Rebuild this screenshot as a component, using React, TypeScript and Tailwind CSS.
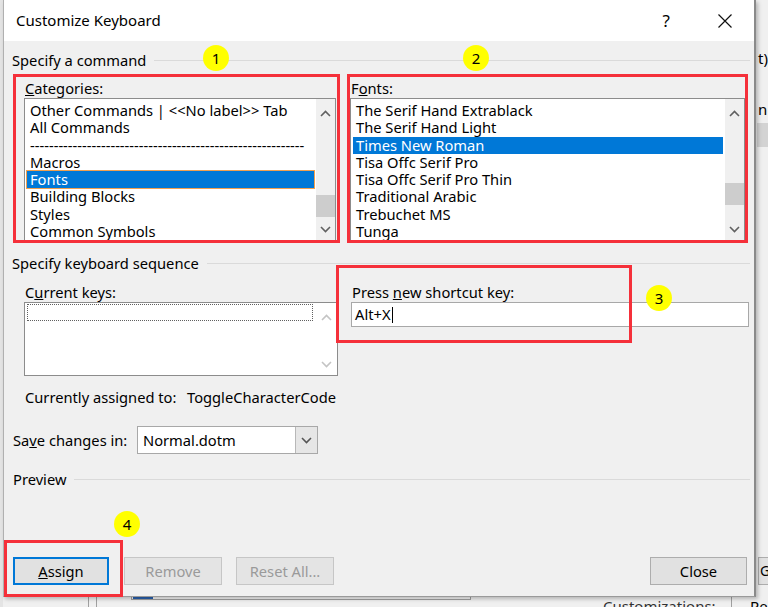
import React from 'react';

const categories = [
  'Other Commands | <<No label>> Tab',
  'All Commands',
  '-'.repeat(58),
  'Macros',
  'Fonts',
  'Building Blocks',
  'Styles',
  'Common Symbols',
];

const fontNames = [
  'The Serif Hand Extrablack',
  'The Serif Hand Light',
  'Times New Roman',
  'Tisa Offc Serif Pro',
  'Tisa Offc Serif Pro Thin',
  'Traditional Arabic',
  'Trebuchet MS',
  'Tunga',
];

const Chevron: React.FC<{ dir: 'up' | 'down'; className?: string }> = ({ dir, className }) => (
  <svg width="11" height="7" viewBox="0 0 11 7" className={className}>
    <path
      d={dir === 'up' ? 'M1 6 L5.5 1.5 L10 6' : 'M1 1 L5.5 5.5 L10 1'}
      fill="none"
      stroke="currentColor"
      strokeWidth="1.6"
    />
  </svg>
);

const GroupHeader: React.FC<{ title: string }> = ({ title }) => (
  <div className="flex h-[20px] items-center">
    <span className="leading-[20px]">{title}</span>
    <div className="ml-[8px] h-px flex-1 bg-[#dadada]" />
  </div>
);

interface ListBoxProps {
  items: string[];
  selected: number;
  focused?: boolean;
  widthClass: string;
  spacerClass: string;
  gapClass: string;
}

// list box with a vertical scroll bar on its right
const ListBox: React.FC<ListBoxProps> = ({ items, selected, focused, widthClass, spacerClass, gapClass }) => (
  <div className={`flex h-[143px] ${widthClass} border border-[#8c8c8c] bg-white`}>
    <div className="flex-1 overflow-hidden pt-[3px]">
      {items.map((item, i) => (
        <div
          key={i}
          className={`ml-[2px] mr-[2px] h-[17.3px] whitespace-nowrap pl-[3px] leading-[17px] ${
            i === selected
              ? `bg-[#0078d7] text-white ${focused ? 'outline outline-1 outline-[#f0a050]' : ''}`
              : 'text-black'
          }`}
        >
          {item}
        </div>
      ))}
    </div>
    <div className="flex w-[19px] flex-col bg-[#f0f0f0]">
      <div className="flex h-[29px] items-center justify-center text-[#606060]">
        <Chevron dir="up" />
      </div>
      <div className={spacerClass} />
      <div className="h-[22px] bg-[#cdcdcd]" />
      <div className={gapClass} />
      <div className="flex h-[22px] items-center justify-center text-[#606060]">
        <Chevron dir="down" />
      </div>
    </div>
  </div>
);

const Button: React.FC<{ label: React.ReactNode; widthClass: string; variant?: 'default' | 'disabled' | 'focused' }> = ({
  label,
  widthClass,
  variant = 'default',
}) => {
  const styles = {
    default: 'border border-[#adadad] bg-[#e1e1e1] text-black',
    disabled: 'border border-[#c6c6c6] bg-[#e4e4e4] text-[#9a9a9a]',
    focused: 'border-2 border-[#0078d7] bg-[#e1e1e1] text-black',
  };
  return (
    <div className={`flex h-[28px] ${widthClass} items-center justify-center ${styles[variant]}`}>{label}</div>
  );
};

const Badge: React.FC<{ n: number; cls: string }> = ({ n, cls }) => (
  <div
    className={`absolute flex h-[26px] w-[26px] items-center justify-center rounded-full bg-[#ffff00] text-[15px] text-black ${cls}`}
  >
    {n}
  </div>
);

export default function App() {
  return (
    <div className="relative h-[607px] w-[768px] overflow-hidden bg-[#f0f0f0] font-['Noto_Sans',sans-serif] text-[14.7px] text-black">
      {/* window behind the dialog */}
      <div className="absolute left-0 top-0 h-full w-[3px] bg-[#e4e4e4]" />
      <div className="absolute left-[758px] top-[48px] text-[15px] leading-[20px]">t)</div>
      <div className="absolute left-[758px] top-[99px] text-[15px] leading-[20px]">n</div>
      <div className="absolute left-[757px] top-[123px] h-[24px] w-[11px] bg-[#d3d3d3]" />
      <div className="absolute left-[758px] top-[557px] flex h-[28px] w-[10px] items-center overflow-hidden border-y border-l border-[#adadad] bg-[#e1e1e1] pl-[1px] text-[14px] leading-[20px]">
        G
      </div>
      <div className="absolute left-[88px] top-[590px] h-[17px] w-px bg-[#a0a0a0]" />
      <div className="absolute left-[96px] top-[590px] h-[17px] w-px bg-[#a0a0a0]" />
      <div className="absolute left-[131px] top-[588px] h-[12px] w-[340px] border border-[#a0a0a0] bg-[#f4f4f4]" />
      <div className="absolute left-[133px] top-[596px] h-[3px] w-[20px] bg-[#2a62b0]" />
      <div className="absolute left-[603px] top-[596px] text-[15px] leading-[20px] text-[#333]">Customizations:</div>
      <div className="absolute left-[731px] top-[590px] h-[17px] w-px bg-[#a0a0a0]" />
      <div className="absolute left-[750px] top-[596px] text-[15px] leading-[20px]">Re</div>

      {/* dialog */}
      <div className="relative ml-[3px] flex h-[597px] w-[753px] flex-col border-b border-l border-r-2 border-b-[#9a9a9a] border-l-[#b0b0b0] border-r-[#8a8a8a] shadow-[2px_2px_4px_rgba(0,0,0,0.25)]">
        {/* title bar */}
        <div className="flex h-[41px] items-center bg-white pl-[12px]">
          <span className="text-[15px]">Customize Keyboard</span>
          <div className="ml-auto flex items-center">
            <span className="text-[17px]">?</span>
            <svg width="14" height="14" viewBox="0 0 14 14" className="ml-[48px] mr-[22px]">
              <path d="M0.5 0.5 L13.5 13.5 M13.5 0.5 L0.5 13.5" stroke="#111" strokeWidth="1.2" />
            </svg>
          </div>
        </div>

        <div className="flex flex-1 flex-col bg-[#f0f0f0] pl-[8px] pr-[4px]">
          <div className="mt-[9px]">
            <GroupHeader title="Specify a command" />
          </div>

          {/* command lists */}
          <div className="mt-[9px] flex pl-[12px]">
            <div className="flex w-[312px] flex-col">
              <div className="h-[19px] pl-[1px] leading-[19px]">
                <span className="underline">C</span>ategories:
              </div>
              <ListBox
                items={categories}
                selected={4}
                focused
                widthClass="w-[312px]"
                spacerClass="h-[67px]"
                gapClass="h-px"
              />
            </div>
            <div className="ml-[14px] flex w-[395px] flex-col">
              <div className="h-[19px] pl-[1px] leading-[19px]">
                F<span className="underline">o</span>nts:
              </div>
              <ListBox
                items={fontNames}
                selected={2}
                widthClass="w-[395px]"
                spacerClass="h-[55px]"
                gapClass="h-[13px]"
              />
            </div>
          </div>

          <div className="mt-[12px]">
            <GroupHeader title="Specify keyboard sequence" />
          </div>

          {/* keys */}
          <div className="mt-[9px] flex pl-[12px]">
            <div className="flex w-[314px] flex-col">
              <div className="h-[20px] pl-[1px] leading-[20px]">
                C<span className="underline">u</span>rrent keys:
              </div>
              <div className="flex h-[74px] border border-[#8c8c8c] bg-white">
                <div className="flex-1">
                  <div className="ml-[2px] mt-[1px] h-[17px] w-[286px] border border-dotted border-[#606060]" />
                </div>
                <div className="flex w-[21px] flex-col text-[#c4c4c4]">
                  <div className="flex h-[29px] items-center justify-center">
                    <Chevron dir="up" />
                  </div>
                  <div className="flex-1" />
                  <div className="flex h-[22px] items-center justify-center">
                    <Chevron dir="down" />
                  </div>
                </div>
              </div>
            </div>
            <div className="ml-[13px] flex w-[398px] flex-col">
              <div className="h-[20px] pl-[1px] leading-[20px]">
                Press <span className="underline">n</span>ew shortcut key:
              </div>
              <div className="flex h-[25px] items-center border border-[#a8a8a8] bg-white pl-[3px]">
                <span>Alt+X</span>
                <span className="ml-px h-[16px] w-px bg-black" />
              </div>
            </div>
          </div>

          <div className="ml-[13px] mt-[11px] flex h-[20px] items-center">
            <span className="w-[162px]">Currently assigned to:</span>
            <span>ToggleCharacterCode</span>
          </div>

          <div className="ml-[1px] mt-[19px] flex h-[28px] items-center">
            <span className="w-[124px]">
              Sa<span className="underline">v</span>e changes in:
            </span>
            <div className="flex h-[28px] w-[181px] border border-[#a8a8a8] bg-white">
              <div className="flex flex-1 items-center pl-[5px]">Normal.dotm</div>
              <div className="flex w-[22px] items-center justify-center border-l border-[#b8b8b8] bg-[#e6e6e6] text-[#555]">
                <Chevron dir="down" />
              </div>
            </div>
          </div>

          <div className="ml-[1px] mt-[15px]">
            <GroupHeader title="Preview" />
          </div>

          {/* buttons */}
          <div className="ml-[1px] mr-[3px] mt-[68px] flex">
            <Button
              widthClass="w-[96px]"
              variant="focused"
              label={
                <span>
                  <span className="underline">A</span>ssign
                </span>
              }
            />
            <div className="ml-[15px]">
              <Button widthClass="w-[98px]" variant="disabled" label="Remove" />
            </div>
            <div className="ml-[14px]">
              <Button widthClass="w-[98px]" variant="disabled" label="Reset All..." />
            </div>
            <div className="ml-auto">
              <Button widthClass="w-[97px]" label="Close" />
            </div>
          </div>
        </div>
      </div>

      {/* annotations */}
      <div className="absolute left-[13px] top-[74px] h-[169px] w-[327px] border-[3px] border-[#f5303a]" />
      <div className="absolute left-[347px] top-[74px] h-[169px] w-[401px] border-[3px] border-[#f5303a]" />
      <div className="absolute left-[336px] top-[265px] h-[78px] w-[296px] border-[3px] border-[#f5303a]" />
      <div className="absolute left-[4px] top-[540px] h-[57px] w-[119px] border-[3px] border-[#f5303a]" />
      <Badge n={1} cls="left-[203px] top-[45px]" />
      <Badge n={2} cls="left-[463px] top-[45px]" />
      <Badge n={3} cls="left-[646px] top-[285px]" />
      <Badge n={4} cls="left-[114px] top-[511px]" />
    </div>
  );
}
